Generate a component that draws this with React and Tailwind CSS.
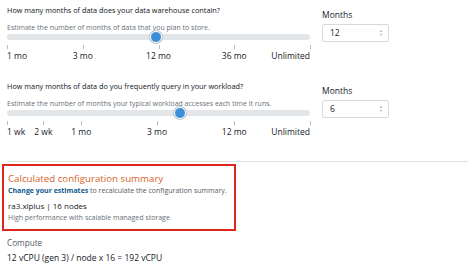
import React from 'react'

const Q1_TICKS = [
  { label: '1 mo', pos: 0, align: 'left' },
  { label: '3 mo', pos: 25 },
  { label: '12 mo', pos: 50 },
  { label: '36 mo', pos: 75 },
  { label: 'Unlimited', pos: 100, align: 'right' },
]

const Q2_TICKS = [
  { label: '1 wk', pos: 0, align: 'left' },
  { label: '2 wk', pos: 12 },
  { label: '1 mo', pos: 24.5 },
  { label: '3 mo', pos: 49.5 },
  { label: '12 mo', pos: 75 },
  { label: 'Unlimited', pos: 100, align: 'right' },
]

function Slider({ ticks, value }) {
  return (
    <div className="relative h-[28px] mt-[1px]">
      {/* track */}
      <div className="absolute left-0 right-0 top-0 h-[6px] rounded-full bg-[#e3e6e8]"></div>
      {/* ticks + labels */}
      {ticks.map((t) => {
        let labelCls = '-translate-x-1/2'
        if (t.align === 'left') labelCls = ''
        if (t.align === 'right') labelCls = '-translate-x-full'
        return (
          <div key={t.label} className="absolute top-0" style={{ left: t.pos + '%' }}>
            <div className="absolute top-[11px] left-0 w-px h-[4px] bg-[#b7bcc0]"></div>
            <div className={'absolute top-[16px] left-0 whitespace-nowrap text-[8.5px] leading-[12px] text-[#16191f] ' + labelCls}>
              {t.label}
            </div>
          </div>
        )
      })}
      {/* thumb */}
      <div
        className="absolute top-[-3px] w-[12px] h-[12px] -translate-x-1/2 rounded-full bg-[#3a8fd8] border-[1.5px] border-white shadow-[0_0_0_1px_#c4c8cc]"
        style={{ left: value + '%' }}
      ></div>
    </div>
  )
}

function NumberBox({ value }) {
  return (
    <div className="w-[67px] h-[18px] border border-[#d5dbdb] rounded-[2px] flex items-center justify-between pl-[7px] pr-[5px] text-[8.5px] text-[#16191f]">
      <span>{value}</span>
      <span className="flex flex-col items-center leading-none text-[4px] text-[#b0b5b9]">
        <span>▲</span>
        <span>▼</span>
      </span>
    </div>
  )
}

function Question({ title, hint, ticks, value, amount }) {
  return (
    <div className="flex h-[76px]">
      <div className="w-[303px] pt-[2px]">
        <div className="text-[7.3px] leading-[12px] text-[#111418]">{title}</div>
        <div className="mt-[7px] text-[7px] leading-[10px] text-[#687078]">{hint}</div>
        <Slider ticks={ticks} value={value} />
      </div>
      <div className="ml-[12px] pt-[7px]">
        <div className="text-[8.5px] leading-[12px] text-[#16191f] mb-[3px]">Months</div>
        <NumberBox value={amount} />
      </div>
    </div>
  )
}

export default function App() {
  return (
    <div className="w-[474px] h-[271px] bg-white overflow-hidden font-['Open_Sans',sans-serif]">
      <div className="pl-[7px] pr-[6px] pt-[2px]">
        <Question
          title="How many months of data does your data warehouse contain?"
          hint="Estimate the number of months of data that you plan to store."
          ticks={Q1_TICKS}
          value={49.2}
          amount="12"
        />
        <Question
          title="How many months of data do you frequently query in your workload?"
          hint="Estimate the number of months your typical workload accesses each time it runs."
          ticks={Q2_TICKS}
          value={57.1}
          amount="6"
        />
        <div className="mt-[7px] h-px bg-[#dfe2e4]"></div>
      </div>

      <div className="ml-[2px] mt-[2px] w-[234px] border-[2.5px] border-[#e0251b] pl-[4px] pt-[5.5px] pb-[6px]">
        <div className="text-[9.7px] leading-[14px] text-[#d8641d]">Calculated configuration summary</div>
        <div className="text-[7px] leading-[10px] text-[#545b64]">
          <span className="font-bold text-[#0f5a8e]">Change your estimates</span> to recalculate the configuration summary.
        </div>
        <div className="mt-[4.4px] text-[8px] leading-[12px] text-[#16191f]">ra3.xlplus | 16 nodes</div>
        <div className="mt-[1px] text-[7px] leading-[10px] text-[#687078]">High performance with scalable managed storage</div>
      </div>

      <div className="pl-[7px] mt-[6.3px]">
        <div className="text-[8.2px] leading-[12px] text-[#545b64]">Compute</div>
        <div className="mt-[3px] text-[8.5px] leading-[12px] text-[#16191f]">12 vCPU (gen 3) / node x 16 = 192 vCPU</div>
      </div>
    </div>
  )
}
